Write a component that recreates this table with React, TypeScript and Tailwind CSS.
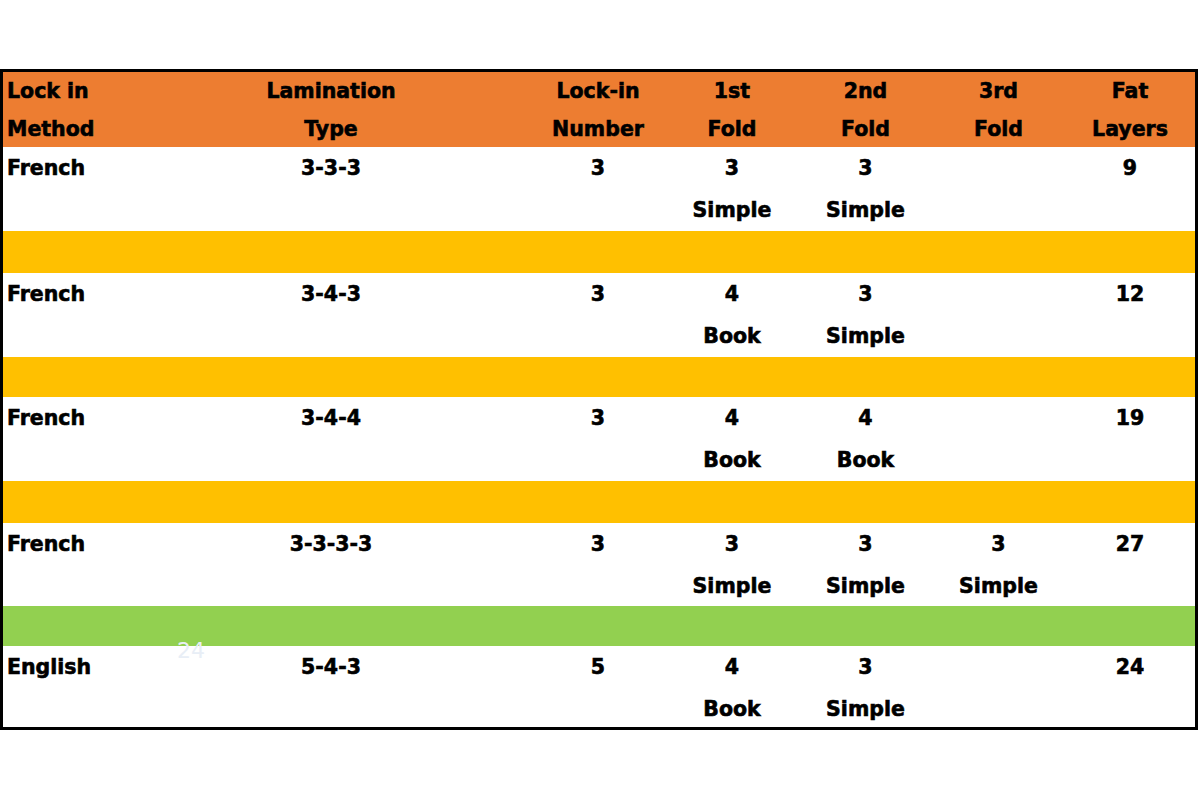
const cols = "grid grid-cols-[128px_400px_134px_134px_133px_133px_130px]";

type Row = {
  method: string;
  type: string;
  number: string;
  folds: string[][];
  layers: string;
  h: string;
  sep?: { color: string; h: string };
};

const rows: Row[] = [
  {
    method: "French",
    type: "3-3-3",
    number: "3",
    folds: [["3", "Simple"], ["3", "Simple"], []],
    layers: "9",
    h: "h-[84px]",
    sep: { color: "bg-[#ffc000]", h: "h-[42px]" },
  },
  {
    method: "French",
    type: "3-4-3",
    number: "3",
    folds: [["4", "Book"], ["3", "Simple"], []],
    layers: "12",
    h: "h-[84px]",
    sep: { color: "bg-[#ffc000]", h: "h-[40px]" },
  },
  {
    method: "French",
    type: "3-4-4",
    number: "3",
    folds: [["4", "Book"], ["4", "Book"], []],
    layers: "19",
    h: "h-[84px]",
    sep: { color: "bg-[#ffc000]", h: "h-[42px]" },
  },
  {
    method: "French",
    type: "3-3-3-3",
    number: "3",
    folds: [["3", "Simple"], ["3", "Simple"], ["3", "Simple"]],
    layers: "27",
    h: "h-[83px]",
    sep: { color: "bg-[#92d050]", h: "h-[40px]" },
  },
  {
    method: "English",
    type: "5-4-3",
    number: "5",
    folds: [["4", "Book"], ["3", "Simple"], []],
    layers: "24",
    h: "h-[81px]",
  },
];

function Cell({ lines, left }: { lines: string[]; left?: boolean }) {
  return (
    <div className={left ? "pl-[4px] text-left" : "text-center"}>
      {lines.map((l, i) => (
        <div key={i} className="h-[42px] leading-[42px] whitespace-nowrap">
          {l}
        </div>
      ))}
    </div>
  );
}

export default function App() {
  return (
    <div className="min-h-[800px] w-[1200px] bg-white pt-[69px] text-black font-bold text-[20.5px] [-webkit-text-stroke:0.6px_black] font-['DejaVu_Sans',Verdana,sans-serif]">
      <div className="w-[1198px] border-[3px] border-black">
        {/* header */}
        <div className={`${cols} h-[75px] bg-[#ed7d31]`}>
          {[
            ["Lock in", "Method"],
            ["Lamination", "Type"],
            ["Lock-in", "Number"],
            ["1st", "Fold"],
            ["2nd", "Fold"],
            ["3rd", "Fold"],
            ["Fat", "Layers"],
          ].map((c, i) => (
            <div key={i} className={i === 0 ? "pl-[4px]" : "text-center"}>
              {c.map((l) => (
                <div key={l} className="h-[38px] leading-[38px] whitespace-nowrap">
                  {l}
                </div>
              ))}
            </div>
          ))}
        </div>

        {rows.map((r, i) => (
          <div key={i}>
            <div className={`${cols} ${r.h} bg-white relative`}>
              <Cell lines={[r.method]} left />
              <Cell lines={[r.type]} />
              <Cell lines={[r.number]} />
              {r.folds.map((f, j) => (
                <Cell key={j} lines={f} />
              ))}
              <Cell lines={[r.layers]} />
              {!r.sep && (
                <span className="absolute left-[174px] top-[-12px] text-[22px] font-normal text-[#e8eef6] [-webkit-text-stroke:0px] font-['DejaVu_Sans_ExtraLight','DejaVu_Sans',sans-serif]">
                  24
                </span>
              )}
            </div>
            {r.sep && <div className={`${r.sep.h} ${r.sep.color}`} />}
          </div>
        ))}
      </div>
    </div>
  );
}
